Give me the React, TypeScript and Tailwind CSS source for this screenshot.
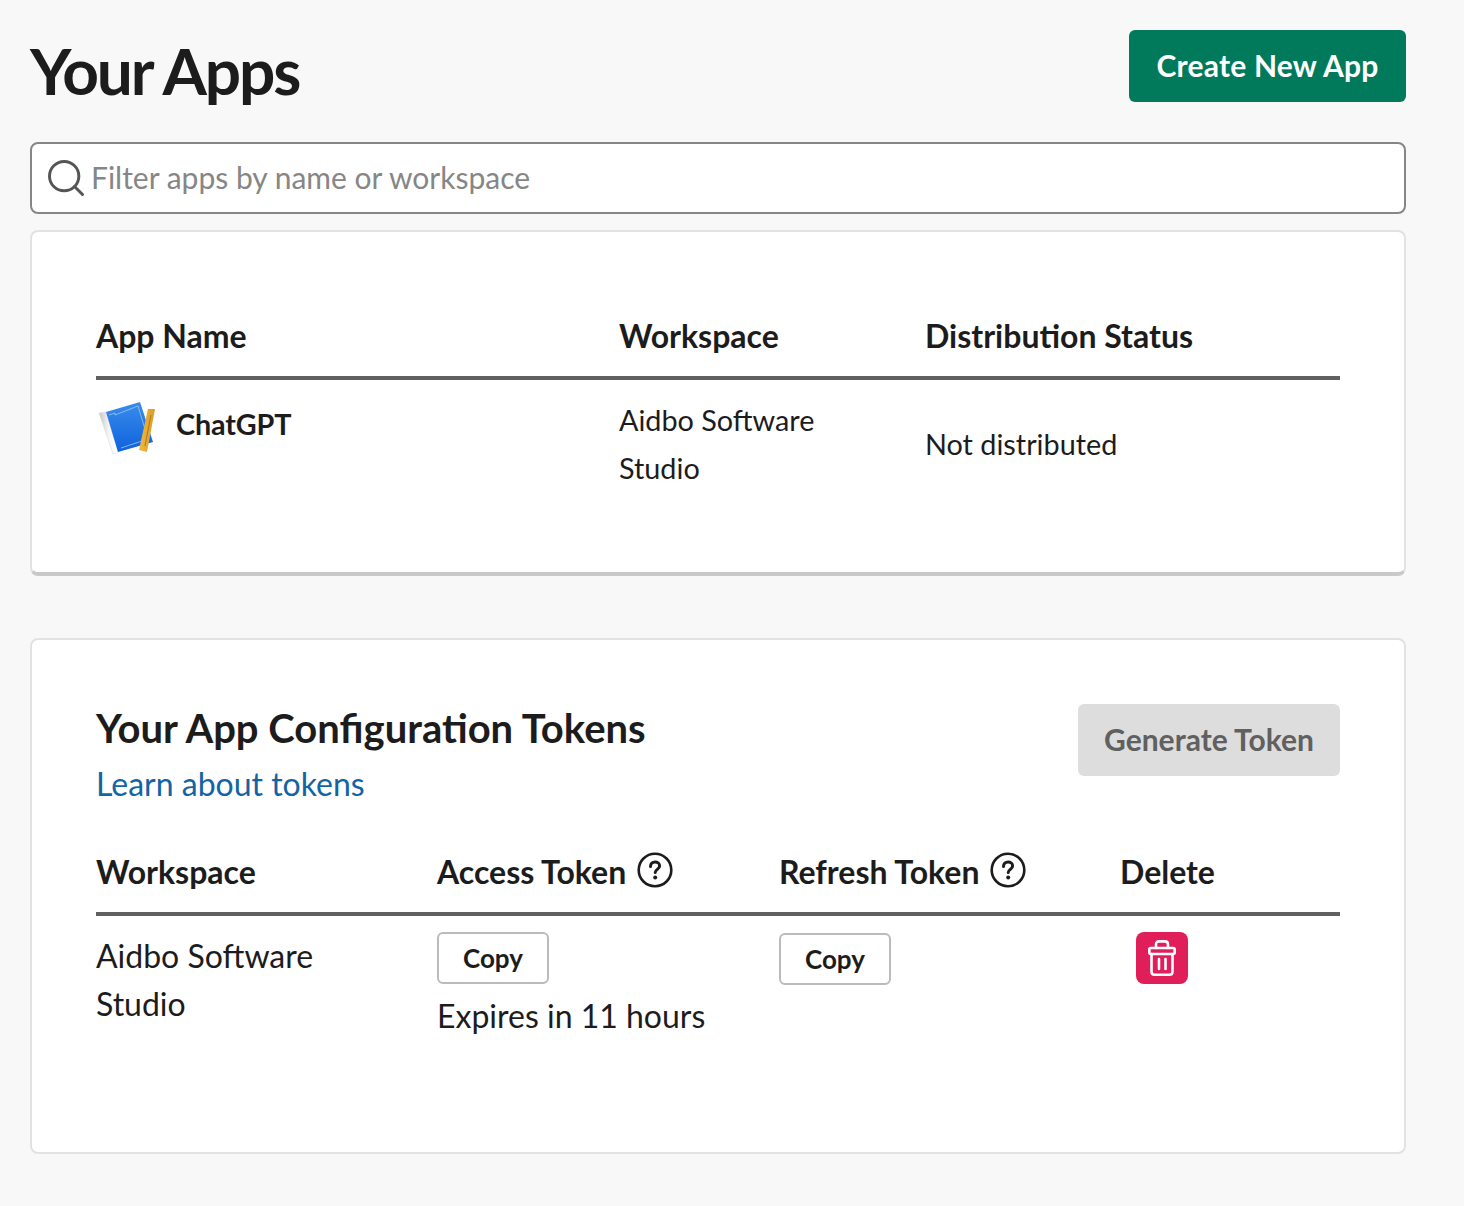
import { Search } from "lucide-react";

function AppIcon() {
  return (
    <svg width="62" height="62" viewBox="0 0 62 62" className="mt-[2px] shrink-0">
      <defs>
        <linearGradient id="cover" x1="0" y1="0" x2="0" y2="1">
          <stop offset="0" stopColor="#3a8cec" />
          <stop offset="1" stopColor="#0d62dc" />
        </linearGradient>
        <linearGradient id="ruler" x1="0" y1="0" x2="1" y2="0">
          <stop offset="0" stopColor="#f0b840" />
          <stop offset="1" stopColor="#dc9c28" />
        </linearGradient>
        <linearGradient id="spine" x1="0" y1="0" x2="1" y2="0">
          <stop offset="0" stopColor="#c4c4c4" />
          <stop offset="0.5" stopColor="#f4f4f4" />
          <stop offset="1" stopColor="#ffffff" />
        </linearGradient>
      </defs>
      <polygon points="3,15 10,14 22,54 17,56" fill="url(#spine)" stroke="#d8d8d8" strokeWidth="0.5" />
      <polygon points="10,14 44,4 57,44 22,54" fill="url(#cover)" />
      <polyline points="13,17 19,15 19,17 42,8 52,41 25,50" fill="none" stroke="#9cc6f4" strokeWidth="0.8" />
      <polygon points="52,11 59,11 51,54 43,52" fill="url(#ruler)" />
      <line x1="55" y1="17" x2="49" y2="48" stroke="#a87a1e" strokeWidth="1" />
    </svg>
  );
}

function HelpIcon() {
  return (
    <svg width="36" height="36" viewBox="0 0 36 36" fill="none" className="shrink-0">
      <circle cx="18" cy="18" r="16.3" stroke="#1d1c1d" strokeWidth="2.6" />
      <path
        d="M13.500 14.500c0-2.800 2-4.500 4.600-4.500 2.600 0 4.500 1.600 4.500 3.900 0 3.300-4.400 3.500-4.400 6.600"
        stroke="#1d1c1d"
        strokeWidth="3"
        strokeLinecap="round"
      />
      <circle cx="18.200" cy="25.500" r="2" fill="#1d1c1d" />
    </svg>
  );
}

function TrashIcon() {
  return (
    <svg width="28" height="36" viewBox="0 0 28 36" fill="none" stroke="#fff" strokeWidth="2.600" strokeLinejoin="round" strokeLinecap="round">
      <path d="M8 8V4.500C8 2.500 9.200 1.400 11 1.400h6c1.800 0 3 1.100 3 3.100V8" />
      <rect x="1.300" y="8" width="25.400" height="6" rx="1.500" />
      <path d="M3.500 14v17.500c0 2 1.200 3.200 3 3.200h15c1.800 0 3-1.200 3-3.200V14" />
      <path d="M11 19v10M17.500 19v10" />
    </svg>
  );
}

export default function App() {
  return (
    <div className="min-h-[1206px] bg-[#f8f8f8] pl-[30px] pr-[58px] pt-[30px] font-['Lato','Noto_Sans',sans-serif] text-[#1d1c1d]">
      {/* Header */}
      <div className="flex items-start justify-between">
        <h1 className="-mt-[1px] text-[64px] leading-[84px] font-bold tracking-[-2.1px]">Your Apps</h1>
        <button className="h-[72px] w-[277px] rounded-[6px] bg-[#007a5a] pb-[2px] text-[30px] font-bold tracking-[0.2px] text-white">
          Create New App
        </button>
      </div>

      {/* Filter */}
      <div className="mt-[29px] flex h-[72px] items-center rounded-[8px] border-2 border-[#868686] bg-white pl-[12px]">
        <Search size={44} strokeWidth={1.6} color="#555555" className="shrink-0" />
        <span className="-mt-[2px] ml-[3px] text-[30px] text-[#868686]">Filter apps by name or workspace</span>
      </div>

      {/* Apps */}
      <div className="mt-[16px] h-[346px] rounded-[8px] border-2 border-b-4 border-[#e2e2e2] border-b-[#c9c9c9] bg-white px-[64px] pt-[80px]">
        <div className="grid grid-cols-[523px_306px_1fr] border-b-4 border-[#616061] pb-[16px] text-[32px] leading-[48px] font-bold">
          <div>App Name</div>
          <div>Workspace</div>
          <div>Distribution Status</div>
        </div>
        <div className="grid grid-cols-[523px_306px_1fr] pt-[16px] text-[28.8px] leading-[48px]">
          <div className="flex items-start gap-[18px]">
            <AppIcon />
            <span className="mt-[4px] font-bold tracking-[-0.15px]">ChatGPT</span>
          </div>
          <div className="w-[240px]">Aidbo Software Studio</div>
          <div className="pt-[24px]">Not distributed</div>
        </div>
      </div>

      {/* Tokens */}
      <div className="mt-[62px] h-[516px] rounded-[8px] border-2 border-[#e2e2e2] bg-white px-[64px] pt-[63px]">
        <div className="flex items-start justify-between">
          <div>
            <h2 className="text-[40px] leading-[50px] font-bold">Your App Configuration Tokens</h2>
            <a className="mt-[7px] block text-[32px] leading-[48px] text-[#1264a3]">Learn about tokens</a>
          </div>
          <button className="mt-[1px] h-[72px] w-[262px] rounded-[6px] bg-[#dddddd] pb-[2px] text-[30px] font-bold text-[#616061]">
            Generate Token
          </button>
        </div>
        <div className="mt-[40px] grid grid-cols-[341px_342px_341px_1fr] border-b-4 border-[#616061] pb-[16px] text-[32px] leading-[48px] font-bold">
          <div>Workspace</div>
          <div className="flex items-center gap-[11px]">
            Access Token
            <span className="-mt-[5px]"><HelpIcon /></span>
          </div>
          <div className="flex items-center gap-[11px]">
            Refresh Token
            <span className="-mt-[5px]"><HelpIcon /></span>
          </div>
          <div>Delete</div>
        </div>
        <div className="grid grid-cols-[341px_342px_342px_1fr] pt-[16px] text-[32px] leading-[48px]">
          <div className="w-[260px]">Aidbo Software Studio</div>
          <div>
            <button className="h-[52px] w-[112px] rounded-[6px] border-2 border-[#bbbbbb] bg-white text-[26px] font-bold">
              Copy
            </button>
            <div className="mt-[8px]">Expires in 11 hours</div>
          </div>
          <div className="pt-[1px]">
            <button className="h-[52px] w-[112px] rounded-[6px] border-2 border-[#bbbbbb] bg-white text-[26px] font-bold">
              Copy
            </button>
          </div>
          <div>
            <button className="ml-[15px] flex h-[52px] w-[52px] items-center justify-center rounded-[8px] bg-[#e01e5a]">
              <TrashIcon />
            </button>
          </div>
        </div>
      </div>
    </div>
  );
}
